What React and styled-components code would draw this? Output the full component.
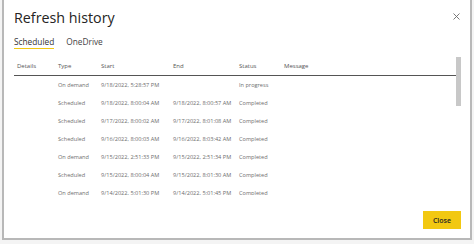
import React from "react";
import styled, { createGlobalStyle } from "styled-components";

const Global = createGlobalStyle`
  html, body { margin: 0; padding: 0; background: #f4f4f4; }
  body { font-family: "Open Sans", "Noto Sans", sans-serif; }
  * { box-sizing: border-box; }
`;

const Page = styled.div`
  width: 474px;
  height: 244px;
  padding: 0 2px 4px 2px;
`;

const Dialog = styled.div`
  width: 470px;
  height: 240px;
  background: #ffffff;
  border-left: 2px solid #b8b8b8;
  border-right: 2px solid #b8b8b8;
  border-bottom: 2px solid #b8b8b8;
  padding: 7.5px 8px 9px 10px;
  display: flex;
  flex-direction: column;
`;

const Header = styled.div`
  display: flex;
  justify-content: space-between;
  align-items: flex-start;
`;

const Title = styled.h1`
  margin: 0;
  font-size: 14.3px;
  line-height: 20px;
  font-weight: 400;
  color: #252423;
`;

const CloseX = styled.button`
  border: 0;
  background: none;
  padding: 0;
  margin: 5px 2px 0 0;
  width: 7px;
  height: 7px;
  display: flex;
  cursor: pointer;
`;

const Tabs = styled.div`
  display: flex;
  gap: 12px;
  margin-top: 8.5px;
`;

const Tab = styled.div`
  font-size: 8.3px;
  line-height: 12px;
  color: ${(p) => (p.$active ? "#333333" : "#444444")};
  border-bottom: 1px solid ${(p) => (p.$active ? "#f2c811" : "transparent")};
`;

const TableWrap = styled.div`
  margin-top: 8px;
  display: flex;
  height: 137.5px;
`;

const Table = styled.div`
  flex: 1;
  overflow: hidden;
`;

const Row = styled.div`
  display: grid;
  grid-template-columns: 41px 43px 72px 66px 45px 1fr;
  height: 18px;
  align-items: center;
  ${(p) => p.$head && "border-bottom: 1px solid #555555;"}
  box-sizing: ${(p) => (p.$head ? "content-box" : "border-box")};
`;

const Cell = styled.div`
  padding-left: 3px;
  font-size: ${(p) => (p.$head ? "6px" : "5.6px")};
  line-height: 18px;
  color: ${(p) => (p.$head ? "#555555" : "#6e6e6e")};
  white-space: nowrap;
`;

const Track = styled.div`
  width: 6px;
`;

const Thumb = styled.div`
  width: 5px;
  height: 49px;
  background: #c8c8c8;
`;

const Spacer = styled.div`
  flex: 1;
`;

const Footer = styled.div`
  display: flex;
  justify-content: flex-end;
`;

const Button = styled.button`
  width: 38px;
  height: 18px;
  border: 0;
  background: #f2c811;
  color: #252423;
  font-family: "Open Sans", sans-serif;
  font-weight: 600;
  font-size: 7px;
  padding: 0;
  margin-right: 1px;
`;

const rows = [
  ["On demand", "9/18/2022, 5:28:57 PM", "", "In progress"],
  ["Scheduled", "9/18/2022, 8:00:04 AM", "9/18/2022, 8:00:57 AM", "Completed"],
  ["Scheduled", "9/17/2022, 8:00:02 AM", "9/17/2022, 8:01:08 AM", "Completed"],
  ["Scheduled", "9/16/2022, 8:00:03 AM", "9/16/2022, 8:03:42 AM", "Completed"],
  ["On demand", "9/15/2022, 2:51:33 PM", "9/15/2022, 2:51:34 PM", "Completed"],
  ["Scheduled", "9/15/2022, 8:00:04 AM", "9/15/2022, 8:01:30 AM", "Completed"],
  ["On demand", "9/14/2022, 5:01:30 PM", "9/14/2022, 5:01:45 PM", "Completed"],
  ["Scheduled", "9/14/2022, 8:00:03 AM", "9/14/2022, 8:01:12 AM", "Completed"],
];

export default function App() {
  return (
    <>
      <Global />
      <Page>
        <Dialog>
          <Header>
            <Title>Refresh history</Title>
            <CloseX aria-label="Close">
              <svg width="7" height="7" viewBox="0 0 7 7">
                <path d="M0.5 0.5 L6.5 6.5 M6.5 0.5 L0.5 6.5" stroke="#6b6b6b" strokeWidth="0.9" fill="none" />
              </svg>
            </CloseX>
          </Header>
          <Tabs>
            <Tab $active>Scheduled</Tab>
            <Tab>OneDrive</Tab>
          </Tabs>
          <TableWrap>
            <Table>
              <Row $head>
                <Cell $head>Details</Cell>
                <Cell $head>Type</Cell>
                <Cell $head>Start</Cell>
                <Cell $head>End</Cell>
                <Cell $head>Status</Cell>
                <Cell $head>Message</Cell>
              </Row>
              {rows.map((r, i) => (
                <Row key={i}>
                  <Cell></Cell>
                  <Cell>{r[0]}</Cell>
                  <Cell>{r[1]}</Cell>
                  <Cell>{r[2]}</Cell>
                  <Cell>{r[3]}</Cell>
                  <Cell></Cell>
                </Row>
              ))}
            </Table>
            <Track>
              <Thumb />
            </Track>
          </TableWrap>
          <Spacer />
          <Footer>
            <Button>Close</Button>
          </Footer>
        </Dialog>
      </Page>
    </>
  );
}
